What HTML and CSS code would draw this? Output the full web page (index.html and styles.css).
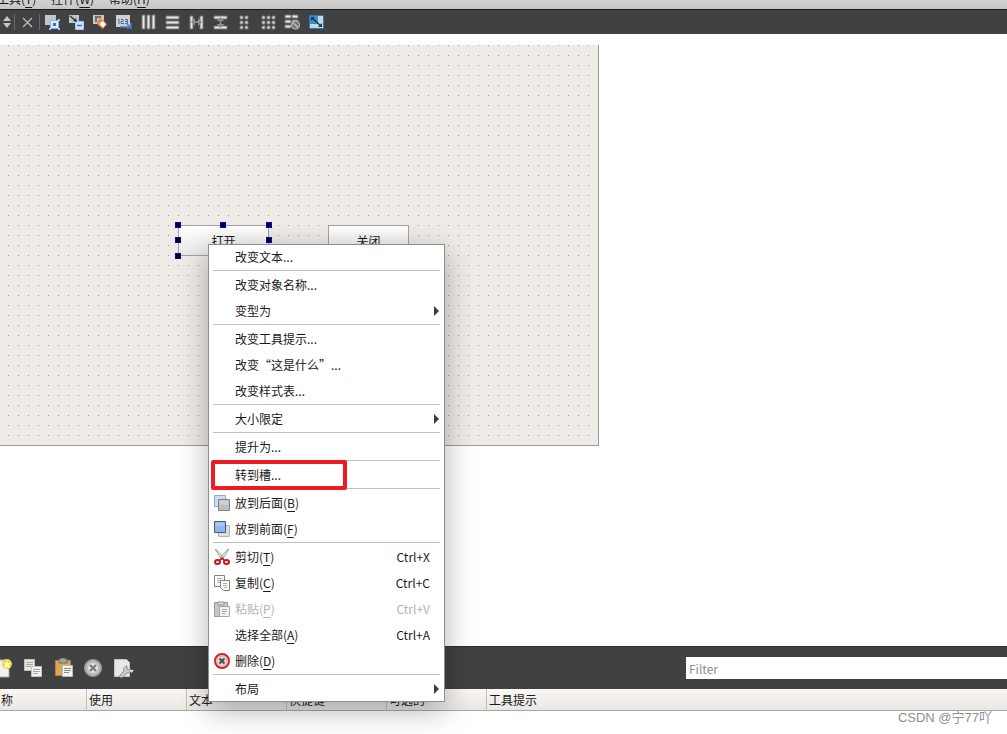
FILE: index.html
```html
<!DOCTYPE html>
<html lang="zh-CN">
<head>
    <meta charset="UTF-8">
    <meta name="viewport" content="width=device-width, initial-scale=1.0">
    <title>Designer</title>
    <link rel="stylesheet" href="styles.css">
</head>
<body>
    <nav class="menubar">
        <a href="#">工具(<u>T</u>)</a>
        <a href="#">控件(<u>W</u>)</a>
        <a href="#">帮助(<u>H</u>)</a>
    </nav>

    <div class="toolbar">
        <button class="spin" aria-label="切换"><svg width="10" height="16" viewBox="0 0 10 16"><path d="M5 2L9 7H1zM5 14L1 9H9z" fill="#c4c4c4"/></svg></button>
        <span class="line"></span>
        <button aria-label="关闭文件"><svg width="16" height="16" viewBox="0 0 16 16"><path d="M4 4l9 9M13 4l-9 9" stroke="#c0c0c0" stroke-width="1.2"/></svg></button>
        <span class="line"></span>
        <!-- 编辑模式 -->
        <button aria-label="编辑控件"><svg width="16" height="16" viewBox="0 0 16 16"><path d="M1 1h11v10H1z" fill="#c4c4c4"/><path d="M6.500 6.500h8v8h-8z" fill="#dcebff" stroke="#8fb4e8"/><path d="M5 5h2v2H5zM14 5h2v2h-2zM5 14h2v2H5zM14 14h2v2h-2z" fill="#a9c8f2"/><path d="M9 9h3v3H9z" fill="#3975c4"/></svg></button>
        <button aria-label="编辑信号/槽"><svg width="16" height="16" viewBox="0 0 16 16"><path d="M1 1h10v8H1z" fill="#c4c4c4"/><path d="M7.500 7.500h8v8h-8z" fill="#cfe2fb" stroke="#a9c6ee"/><path d="M9 11.500h5" stroke="#3d72b8" stroke-width="1.500"/><path d="M2 2l6 5" stroke="#263847" stroke-width="1.500"/><path d="M9 8L5 7l3-3z" fill="#263847"/></svg></button>
        <button aria-label="编辑伙伴"><svg width="16" height="16" viewBox="0 0 16 16"><path d="M1 1h11v9H1z" fill="#c9c6c3"/><path d="M3 3h6M4 3v5" stroke="#555" stroke-width="1.500"/><path d="M6 6l3-2 6 6-4 5-6-5z" fill="#f08a45"/><path d="M10.500 7l3.500 3.500-3 3L7.500 10z" fill="#fff"/></svg></button>
        <button aria-label="编辑Tab顺序"><svg width="16" height="16" viewBox="0 0 16 16"><path d="M0 1h14v12H0z" fill="#d1d1d1"/><path d="M2 6l1-1v5M5 5.500h2v2H5v2h3M9 5.500h2.500v4H9M9 7.500h2" fill="none" stroke="#3f70ae"/><path d="M4 13h10M11 10l3 3-3 2M15 9v6" fill="none" stroke="#477fc5" stroke-width="1.500"/></svg></button>
        <!-- 布局 -->
        <button aria-label="水平布局"><svg width="16" height="16" viewBox="0 0 16 16"><path d="M2 1h3v14H2zM7 1h3v14H7zM12 1h3v14h-3z" fill="#e9e7e3" stroke="#77746f"/></svg></button>
        <button aria-label="垂直布局"><svg width="16" height="16" viewBox="0 0 16 16"><path d="M2 2h13v3H2zM2 7h13v3H2zM2 12h13v3H2z" fill="#e9e7e3" stroke="#77746f"/></svg></button>
        <button aria-label="水平分裂器"><svg width="16" height="16" viewBox="0 0 16 16"><path d="M2 2h3v13H2zM12 2h3v13h-3z" fill="#e9e7e3" stroke="#77746f"/><path d="M3 8l4-4v3h3V4l4 4-4 4V9H7v3z" fill="#8a8a88"/></svg></button>
        <button aria-label="垂直分裂器"><svg width="16" height="16" viewBox="0 0 16 16"><path d="M2 2h13v3H2zM2 12h13v3H2z" fill="#e9e7e3" stroke="#77746f"/><path d="M8.500 3l4 4h-3v3h3l-4 4-4-4h3V7h-3z" fill="#8a8a88"/></svg></button>
        <button aria-label="表单布局"><svg width="16" height="16" viewBox="0 0 16 16"><path d="M4 2h3v3H4zM9 2h3v3H9zM4 7h3v3H4zM9 7h3v3H9zM4 12h3v3H4zM9 12h3v3H9z" fill="#e9e7e3" stroke="#77746f"/></svg></button>
        <button aria-label="栅格布局"><svg width="16" height="16" viewBox="0 0 16 16"><path d="M2 2h3v3H2zM7 2h3v3H7zM12 2h3v3h-3zM2 7h3v3H2zM7 7h3v3H7zM12 7h3v3h-3zM2 12h3v3H2zM7 12h3v3H7zM12 12h3v3h-3z" fill="#e9e7e3" stroke="#77746f"/></svg></button>
        <button aria-label="打破布局"><svg width="16" height="16" viewBox="0 0 16 16"><path d="M1 1h6v3H1zM8 1h6v3H8zM1 6h6v3H1zM8 6h6v3H8zM1 11h6v3H1z" fill="#e9e7e3" stroke="#77746f"/><circle cx="11.500" cy="11" r="4" fill="#777" stroke="#a8a8a8" stroke-width="1.500"/><path d="M9 8.500l5 5" stroke="#bbb" stroke-width="1.500"/></svg></button>
        <button aria-label="调整大小"><svg width="16" height="16" viewBox="0 0 16 16"><path d="M1.500 1.500h14v13h-14z" fill="#c3d9e2" stroke="#3379b1"/><path d="M2 2h8v8H2z" fill="#3f8fca"/><path d="M4 4l9 8" stroke="#0c3c55" stroke-width="1.500"/><path d="M3 3h4L3 7zM14 13h-4l4-4z" fill="#0c3c55"/></svg></button>
    </div>

    <main class="workspace">
        <div class="form">
            <button class="widget open">打开</button>
            <button class="widget shut">关闭</button>
            <i class="handle nw"></i>
            <i class="handle n"></i>
            <i class="handle ne"></i>
            <i class="handle w"></i>
            <i class="handle e"></i>
            <i class="handle sw"></i>
        </div>
    </main>

    <section class="actions">
        <div class="action-bar">
            <button aria-label="新建"><svg width="20" height="20" viewBox="0 0 20 20"><path d="M1 2h14v17H1z" fill="#f1f3ef" stroke="#aaa"/><circle cx="13" cy="6" r="5" fill="#eadb3b"/><path d="M13 2l1 3 3 0-2 2 1 3-3-1-3 1 1-3-2-2 3 0z" fill="#fffbc8"/></svg></button>
            <button aria-label="复制"><svg width="20" height="20" viewBox="0 0 20 20"><path d="M.500 1.500h10v11H.500z" fill="#e9e6e3" stroke="#c5c1bd"/><path d="M2 4.500h7M2 6.500h7M2 8.500h5" stroke="#aaa6a2"/><path d="M7.500 8.500h10v10h-10z" fill="#f4f2ef" stroke="#c5c1bd"/><path d="M9 11.500h7M9 13.500h7M9 15.500h5" stroke="#aaa6a2"/></svg></button>
            <button aria-label="粘贴"><svg width="20" height="20" viewBox="0 0 20 20"><path d="M1.500 2.500h15v15h-15z" fill="#dfa455" stroke="#b98440"/><path d="M5 1h2V0h4v1h2v4H5z" fill="#a3a6a3" stroke="#6b6e6b"/><path d="M8.500 7.500h10v11h-10z" fill="#f4f4f2" stroke="#bbb"/><path d="M10 10.500h7M10 12.500h7M10 14.500h5" stroke="#8a8a8a"/></svg></button>
            <button aria-label="删除"><svg width="20" height="20" viewBox="0 0 20 20"><circle cx="9" cy="10" r="8" fill="#c4c2c0" stroke="#a3a19f" stroke-width="2"/><circle cx="9" cy="10" r="5.500" fill="#e3e1df" stroke="#bbb9b7"/><path d="M6 7l6 6M12 7l-6 6" stroke="#777" stroke-width="2"/></svg></button>
            <button aria-label="配置"><svg width="20" height="20" viewBox="0 0 20 20"><path d="M.500 1.500h12l3 3v14H.500z" fill="#e5e8e4" stroke="#c2c5c1"/><path d="M6 17l4-4c-1-3 1-5 3-5v3l2 1 2-1c0 3-2 4-4 4l-4 4c-2 1-4 0-3-2z" fill="#c9ccc9" stroke="#8b8e8b"/><path d="M15 12h5l-2.500 3z" fill="#ddd"/></svg></button>
            <input class="filter" type="text" placeholder="Filter" aria-label="Filter">
        </div>
        <table>
            <thead>
                <tr>
                    <th>名称</th>
                    <th>使用</th>
                    <th>文本</th>
                    <th>快捷键</th>
                    <th>可选的</th>
                    <th class="last">工具提示</th>
                </tr>
            </thead>
        </table>
    </section>

    <!-- 右键菜单 -->
    <div class="menu">
        <button>改变文本...</button>
        <hr>
        <button>改变对象名称...</button>
        <button class="sub">变型为</button>
        <hr>
        <button>改变工具提示...</button>
        <button>改变“这是什么”...</button>
        <button>改变样式表...</button>
        <hr>
        <button class="sub">大小限定</button>
        <hr>
        <button>提升为...</button>
        <hr>
        <button class="marked">转到槽...</button>
        <hr>
        <button>
            <svg width="16" height="16" viewBox="0 0 16 16"><path d="M.500 .500h11v11H.500z" fill="#c9dcf5" stroke="#8fa9cb"/><path d="M4.500 4.500h11v11h-11z" fill="#bfbfbd" stroke="#80807e"/><path d="M5.500 5.500h9v4h-9z" fill="#d0d0ce"/></svg>
            <span>放到后面(<u>B</u>)</span>
        </button>
        <button>
            <svg width="16" height="16" viewBox="0 0 16 16"><path d="M4.500 4.500h11v11h-11z" fill="#deded9" stroke="#b5b5b2"/><path d="M.500 .500h11v11H.500z" fill="#8fb5ee" stroke="#3c5c8d"/><path d="M1.500 1.500h9v4h-9z" fill="#a9c7f3"/></svg>
            <span>放到前面(<u>F</u>)</span>
        </button>
        <hr>
        <button>
            <svg width="16" height="16" viewBox="0 0 16 16"><path d="M1 0h1l8 9-2 2zM15 0h-1L6 9l2 2z" fill="#eee" stroke="#8b8e8a" stroke-width=".800"/><ellipse cx="3.500" cy="13" rx="2.500" ry="2" fill="#fff" stroke="#c9151e" stroke-width="2"/><ellipse cx="12.500" cy="13" rx="2.500" ry="2" fill="#fff" stroke="#c9151e" stroke-width="2"/><path d="M5.500 11.500L8 9l2.500 2.500" fill="none" stroke="#c9151e" stroke-width="1.500"/></svg>
            <span>剪切(<u>T</u>)</span><kbd>Ctrl+X</kbd>
        </button>
        <button>
            <svg width="16" height="16" viewBox="0 0 16 16"><path d="M.500 .500h10v11H.500z" fill="#fff" stroke="#82827f"/><path d="M3 3.500h5M3 5.500h5M3 7.500h3" stroke="#aaa"/><path d="M6.500 5.500h9v10h-6l-3-3z" fill="#fff" stroke="#82827f"/><path d="M9 8.500h4M9 10.500h4M10 12.500h3" stroke="#aaa"/></svg>
            <span>复制(<u>C</u>)</span><kbd>Ctrl+C</kbd>
        </button>
        <button disabled>
            <svg width="16" height="16" viewBox="0 0 16 16"><path d="M.500 1.500h13v14H.500z" fill="#c9c5c0" stroke="#9c9996"/><path d="M4 2V1h6v3H4z" fill="#ddd" stroke="#999"/><path d="M5.500 5.500h10v10h-10z" fill="#f3f2f0" stroke="#aaa7a4"/><path d="M8 8.500h5M8 10.500h5M8 12.500h3" stroke="#aaa"/></svg>
            <span>粘贴(<u>P</u>)</span><kbd>Ctrl+V</kbd>
        </button>
        <button><span>选择全部(<u>A</u>)</span><kbd>Ctrl+A</kbd></button>
        <button>
            <svg width="16" height="16" viewBox="0 0 16 16"><circle cx="8" cy="8" r="7" fill="#e8e8e8" stroke="#d61f26" stroke-width="2"/><circle cx="8" cy="8" r="5" fill="#dedede" stroke="#f2a5a5"/><path d="M5.500 5.500l5 5M10.500 5.500l-5 5" stroke="#4a4a4a" stroke-width="2"/></svg>
            <span>删除(<u>D</u>)</span>
        </button>
        <hr>
        <button class="sub">布局</button>
    </div>

    <div class="watermark">CSDN @宁77吖</div>
</body>
</html>
```

FILE: styles.css
```css
*, *::before, *::after{
    box-sizing: border-box;
}
body{
    margin: 0;
    height: 100vh;
    display: flex;
    flex-direction: column;
    overflow: hidden;
    position: relative;
    background: #fff;
    color: #1a1a1a;
    font: 12px/18px "Noto Sans CJK SC", sans-serif;
}
button{
    margin: 0;
    padding: 0;
    border: 0;
    background: none;
    color: inherit;
    font: inherit;
}
svg{
    display: block;
    flex: none;
}
u{
    text-underline-offset: 3px;
}

/* 顶部 */
.menubar{
    height: 9px;
    display: flex;
    align-items: flex-end;
    gap: 15px;
    margin-left: -3px;
    padding-bottom: 1px;
    overflow: hidden;
    background: linear-gradient(#d2d2d2, #c6c6c6);
}
.menubar a{
    color: #1a1a1a;
    text-decoration: none;
}
.toolbar{
    height: 25px;
    display: flex;
    align-items: center;
    background: #404143;
    border-top: 1px solid #1e1e1f;
}
.toolbar button{
    width: 24px;
    display: flex;
    justify-content: center;
}
.toolbar .spin{
    width: 14px;
}
.toolbar .line{
    width: 1px;
    height: 16px;
    background: #68696b;
}

/* 窗体 */
.workspace{
    flex: 1;
    padding-top: 11px;
}
.form{
    position: relative;
    width: 599px;
    height: 401px;
    border: solid #9e9c98;
    border-width: 0 1px 1px 0;
    background: #efebe7 conic-gradient(from 270deg at 1px 1px, #9c9a97 90deg, transparent 0) 8px 0 / 10px 10px;
}
.widget{
    position: absolute;
    top: 180px;
    height: 31px;
    border: 1px solid #a5a29e;
    background: linear-gradient(#fff, #ebe9e6);
}
.open{
    left: 178px;
    width: 91px;
}
.shut{
    left: 328px;
    width: 81px;
    border-radius: 2px;
}
.handle{
    position: absolute;
    width: 6px;
    height: 6px;
    background: #000;
    border: 1px solid #0000f0;
}
.nw, .n, .ne{
    top: 177px;
}
.w, .e{
    top: 192px;
}
.sw{
    top: 208px;
}
.nw, .w, .sw{
    left: 175px;
}
.n{
    left: 220px;
}
.ne, .e{
    left: 266px;
}

/* 动作编辑器 */
.actions{
    height: 88px;
    overflow: hidden;
}
.action-bar{
    height: 43px;
    display: flex;
    align-items: center;
    padding-left: 19px;
    margin-left: -30px;
    background: #404143;
    border-top: 1px solid #2c2f30;
}
.action-bar button{
    width: 30px;
    display: flex;
    justify-content: center;
}
.filter{
    width: 321px;
    height: 22px;
    margin-left: auto;
    padding: 0 3px;
    border: 0;
    background: #fff;
    font: 12px/18px "Noto Sans CJK SC", sans-serif;
}
.filter::placeholder{
    color: #8c8c8c;
}
table{
    width: calc(100% + 13px);
    margin-left: -13px;
    table-layout: fixed;
    border-collapse: separate;
    border-spacing: 0;
}
th{
    width: 100px;
    height: 22px;
    padding: 0 2px;
    border-right: 1px solid #c5c0bc;
    border-bottom: 1px solid #aea6a1;
    background: linear-gradient(#fbf7f4, #e9e7e3);
    font-weight: normal;
    text-align: left;
}
th.last{
    width: auto;
    border-right: 0;
}

/* 右键菜单 */
.menu{
    position: absolute;
    left: 208px;
    top: 244px;
    width: 237px;
    background: #fff;
    box-shadow: inset 0 0 0 1px #8e8e8c, 0 8px 28px rgba(0, 0, 0, .3);
}
.menu button{
    position: relative;
    width: 100%;
    height: 26px;
    display: flex;
    align-items: center;
    padding: 0 15px 0 27px;
    text-align: left;
}
.menu button:disabled{
    color: #b4b4b4;
}
.menu hr{
    height: 2px;
    margin: 0 5px;
    border: 0;
    border-top: 1px solid #c0c0c0;
}
.menu svg{
    margin: 0 5px 0 -21px;
}
.menu kbd{
    margin-left: auto;
    font: inherit;
}
.menu .sub::after{
    content: "";
    position: absolute;
    right: 6px;
    top: 8px;
    border: solid transparent;
    border-width: 5px 0 5px 5px;
    border-left-color: #3c3c3c;
}
.marked::before{
    content: "";
    position: absolute;
    left: 3px;
    top: -2px;
    width: 136px;
    height: 30px;
    border: 4px solid #ed1c24;
    border-radius: 2px;
}

.watermark{
    position: absolute;
    right: 15px;
    bottom: 6px;
    color: #8f8f8f;
    font: 13px/20px "Liberation Sans", "Noto Sans CJK SC", sans-serif;
}
```
